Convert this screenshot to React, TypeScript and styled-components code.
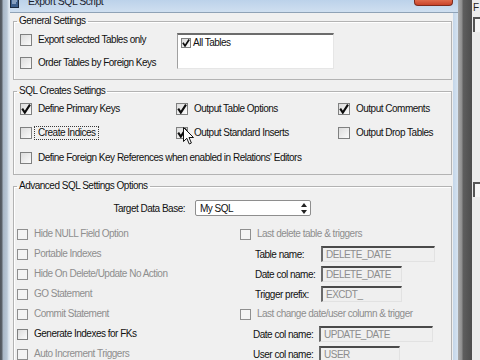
import React from "react";
import styled, { createGlobalStyle } from "styled-components";

const FONT = `"Liberation Sans", Arial, sans-serif`;

const GlobalStyle = createGlobalStyle`
  html, body {
    margin: 0;
    padding: 0;
  }
  body {
    width: 480px;
    height: 360px;
    overflow: hidden;
    background: #e9e9e9;
    font-family: ${FONT};
    font-size: 10px;
    letter-spacing: -0.5px;
    color: #111;
  }
`;

const Screen = styled.div`
  display: flex;
  width: 480px;
  height: 360px;
  overflow: hidden;
`;

const LeftEdge = styled.div`
  flex: none;
  width: 10px;
  background: linear-gradient(to right, #4f555c 0, #5d646c 2px, #a9b7c6 3px, #b9c8d7 7px, #e2eaf2 9px);
`;

const Dialog = styled.div`
  flex: none;
  width: 448px;
  display: flex;
  flex-direction: column;
`;

const TitleBar = styled.div`
  flex: none;
  height: 12px;
  display: flex;
  align-items: flex-start;
  background: linear-gradient(#bcd2ea, #cfdff0);
  border-bottom: 1px solid #8fa2b6;
`;

const TitleIcon = styled.svg`
  flex: none;
  margin: -2px 0 0 0;
`;

const TitleText = styled.span`
  margin: -4px 0 0 9px;
  font-size: 10.5px;
  line-height: 11px;
  color: #1c2430;
`;

const CloseButton = styled.div`
  margin: 0 5px 0 auto;
  width: 37px;
  height: 5px;
  background: linear-gradient(#df6a4c, #c8432a);
  border: 1px solid #7d2a1c;
  border-top: none;
  border-radius: 0 0 4px 4px;
`;

const DialogBody = styled.div`
  flex: 1;
  display: flex;
`;

const Content = styled.div`
  flex: none;
  width: 440px;
  background: #f0f0f0;
  padding: 0 0 0 3px;
  display: flex;
  flex-direction: column;
`;

const RightFrame = styled.div`
  flex: 1;
  background: linear-gradient(to right, #c4d6e9, #d7e4f1);
`;

const DarkStrip = styled.div`
  flex: none;
  width: 14px;
  background: linear-gradient(to right, #a8a8a8 0, #8c8c8c 4px, #5e5e5e 5px, #4d4d4d 14px);
`;

const OtherWindow = styled.div`
  flex: 1;
  background: #ececec;
  display: flex;
  flex-direction: column;
  padding: 2px 0 0 1px;
`;

const OtherText = styled.span`
  font-size: 10px;
  line-height: 11px;
  color: #222;
`;

const OtherBox = styled.div<{ $top: number }>`
  margin-top: ${(p) => p.$top}px;
  height: 13px;
  border-top: 2px solid #555;
  border-left: 2px solid #555;
  background: #f6f6f6;
`;

const Group = styled.fieldset<{ $top: number }>`
  margin: ${(p) => p.$top}px 0 0 0;
  padding: 0;
  min-width: 0;
  width: 439px;
  box-sizing: border-box;
  border: 1px solid #b3b3b3;
  box-shadow: inset 1px 1px 0 #fff;
`;

const Legend = styled.legend`
  margin-left: 3px;
  padding: 0 2px;
  font-size: 10px;
  line-height: 12px;
  color: #111;
`;

const GeneralRow = styled.div`
  display: flex;
  padding: 6px 0 10px 6px;
`;

const GeneralChecks = styled.div`
  width: 157px;
  display: flex;
  flex-direction: column;
  gap: 11px;
  padding-top: 1px;
`;

const ListBox = styled.div`
  width: 157px;
  height: 36px;
  box-sizing: border-box;
  background: #fff;
  border-top: 2px solid #6c6c6c;
  border-left: 1px solid #a0a0a0;
  border-right: 1px solid #e6e6e6;
  border-bottom: 1px solid #e6e6e6;
  padding: 2px 3px;
`;

const CreatesGrid = styled.div`
  display: grid;
  grid-template-columns: 156px 162px auto;
  grid-template-rows: 24px 24px 25px;
  padding: 0 0 4px 6px;
  align-items: center;
`;

const WideCell = styled.div`
  grid-column: 1 / 4;
`;

const Item = styled.label<{ $gap?: number }>`
  position: relative;
  display: flex;
  align-items: center;
  gap: ${(p) => p.$gap ?? 6}px;
  white-space: nowrap;
`;

const ItemText = styled.span<{ $disabled?: boolean; $focused?: boolean }>`
  font-size: 10px;
  line-height: 12px;
  color: ${(p) => (p.$disabled ? "#8e8e8e" : "#111")};
  ${(p) =>
    p.$focused
      ? `border: 1px dotted #3a3a3a; padding: 0 3px; margin-left: -4px;`
      : ""}
`;

const Box = styled.span<{ $disabled?: boolean; $size: number }>`
  flex: none;
  width: ${(p) => p.$size}px;
  height: ${(p) => p.$size}px;
  box-sizing: border-box;
  border: 1px solid ${(p) => (p.$disabled ? "#8f8f8f" : "#7f8080")};
  background: ${(p) =>
    p.$disabled ? "#f4f4f4" : "linear-gradient(135deg, #dcdcdc, #fbfbfb)"};
  display: flex;
  align-items: center;
  justify-content: center;
`;

const Cursor = styled.svg`
  position: absolute;
  left: 7px;
  top: 0px;
`;

const TargetRow = styled.div`
  display: flex;
  align-items: center;
  padding: 8px 0 0 3px;
  height: 16px;
`;

const TargetLabel = styled.span`
  width: 168px;
  text-align: right;
  margin-right: 10px;
`;

const Select = styled.div`
  width: 116px;
  height: 16px;
  box-sizing: border-box;
  background: #fff;
  border: 1px solid #8e8e8e;
  border-radius: 2px;
  display: flex;
  align-items: center;
  padding: 0 3px 0 4px;
`;

const SelectValue = styled.span`
  flex: 1;
`;

const AdvancedGrid = styled.div`
  display: grid;
  grid-template-columns: 223px 1fr;
  grid-template-rows: repeat(7, 20px);
  grid-auto-flow: column;
  align-items: center;
  margin-top: 8px;
  padding-left: 3px;
`;

const FieldRow = styled.div<{ $indent: number }>`
  display: flex;
  align-items: center;
  padding-left: ${(p) => p.$indent}px;
`;

const FieldLabel = styled.span`
  width: 66px;
  white-space: nowrap;
  color: #111;
`;

const TextInput = styled.div<{ $width: number }>`
  width: ${(p) => p.$width}px;
  height: 16px;
  box-sizing: border-box;
  background: #efefef;
  border-top: 2px solid #4a4a4a;
  border-left: 2px solid #6a6a6a;
  border-right: 1px solid #e2e2e2;
  border-bottom: 1px solid #e2e2e2;
  padding: 0 3px;
  line-height: 13px;
  color: #8d8d8d;
`;

type CheckProps = {
  label: string;
  checked?: boolean;
  disabled?: boolean;
  focused?: boolean;
  size?: number;
  gap?: number;
  cursor?: boolean;
};

const CheckItem: React.FC<CheckProps> = ({ label, checked, disabled, focused, size = 12, gap, cursor }) => (
  <Item $gap={gap}>
    <Box $disabled={disabled} $size={size}>
      {checked && (
        <svg width={size - 2} height={size - 2} viewBox="0 0 10 10">
          <path d="M1.2 4.6 L3.8 8.6 L9 0.6" stroke="#0d0d0d" strokeWidth="2.1" fill="none" />
        </svg>
      )}
    </Box>
    <ItemText $disabled={disabled} $focused={focused}>
      {label}
    </ItemText>
    {cursor && (
      <Cursor width="12" height="18" viewBox="0 0 12 18">
        <path d="M0.5 0.5 L0.5 14.5 L3.8 11.3 L6.3 17 L8.4 16 L6 10.5 L10.5 10.5 Z" fill="#fff" stroke="#111" strokeWidth="1" />
      </Cursor>
    )}
  </Item>
);

const advancedLeft: [string, boolean][] = [
  ["Hide NULL Field Option", true],
  ["Portable Indexes", true],
  ["Hide On Delete/Update No Action", true],
  ["GO Statement", true],
  ["Commit Statement", true],
  ["Generate Indexes for FKs", false],
  ["Auto Increment Triggers", true],
];

export default function App() {
  return (
    <>
      <GlobalStyle />
      <Screen>
        <LeftEdge />
        <Dialog>
          <TitleBar>
            <TitleIcon width="9" height="10" viewBox="0 0 9 10">
              <rect x="0.5" y="0.5" width="8" height="9" fill="#3d5f8c" stroke="#1b2a40" />
              <path d="M2 3 L7 3 M2 5 L6 5" stroke="#cfe0f3" strokeWidth="1" />
            </TitleIcon>
            <TitleText>Export SQL Script</TitleText>
            <CloseButton />
          </TitleBar>
          <DialogBody>
            <Content>
              <Group $top={2}>
                <Legend>General Settings</Legend>
                <GeneralRow>
                  <GeneralChecks>
                    <CheckItem label="Export selected Tables only" />
                    <CheckItem label="Order Tables by Foreign Keys" />
                  </GeneralChecks>
                  <ListBox>
                    <CheckItem label="All Tables" checked size={10} gap={2} />
                  </ListBox>
                </GeneralRow>
              </Group>

              <Group $top={5}>
                <Legend>SQL Creates Settings</Legend>
                <CreatesGrid>
                  <CheckItem label="Define Primary Keys" checked />
                  <CheckItem label="Output Table Options" checked />
                  <CheckItem label="Output Comments" checked />
                  <CheckItem label="Create Indices" focused />
                  <CheckItem label="Output Standard Inserts" checked cursor />
                  <CheckItem label="Output Drop Tables" />
                  <WideCell>
                    <CheckItem label="Define Foreign Key References when enabled in Relations' Editors" />
                  </WideCell>
                </CreatesGrid>
              </Group>

              <Group $top={5}>
                <Legend>Advanced SQL Settings Options</Legend>
                <TargetRow>
                  <TargetLabel>Target Data Base:</TargetLabel>
                  <Select>
                    <SelectValue>My SQL</SelectValue>
                    <svg width="6" height="11" viewBox="0 0 6 11">
                      <path d="M3 0 L6 4 L0 4 Z M3 11 L6 7 L0 7 Z" fill="#222" />
                    </svg>
                  </Select>
                </TargetRow>
                <AdvancedGrid>
                  {advancedLeft.map(([label, disabled]) => (
                    <CheckItem key={label} label={label} disabled={disabled} size={11} />
                  ))}
                  <CheckItem label="Last delete table & triggers" disabled size={11} />
                  <FieldRow $indent={15}>
                    <FieldLabel>Table name:</FieldLabel>
                    <TextInput $width={114}>DELETE_DATE</TextInput>
                  </FieldRow>
                  <FieldRow $indent={15}>
                    <FieldLabel>Date col name:</FieldLabel>
                    <TextInput $width={81}>DELETE_DATE</TextInput>
                  </FieldRow>
                  <FieldRow $indent={15}>
                    <FieldLabel>Trigger prefix:</FieldLabel>
                    <TextInput $width={81}>EXCDT_</TextInput>
                  </FieldRow>
                  <CheckItem label="Last change date/user column & trigger" disabled size={11} />
                  <FieldRow $indent={13}>
                    <FieldLabel>Date col name:</FieldLabel>
                    <TextInput $width={114}>UPDATE_DATE</TextInput>
                  </FieldRow>
                  <FieldRow $indent={13}>
                    <FieldLabel>User col name:</FieldLabel>
                    <TextInput $width={81}>USER</TextInput>
                  </FieldRow>
                </AdvancedGrid>
              </Group>
            </Content>
            <RightFrame />
          </DialogBody>
        </Dialog>
        <DarkStrip />
        <OtherWindow>
          <OtherText>F</OtherText>
          <OtherBox $top={4} />
          <OtherBox $top={150} />
        </OtherWindow>
      </Screen>
    </>
  );
}
